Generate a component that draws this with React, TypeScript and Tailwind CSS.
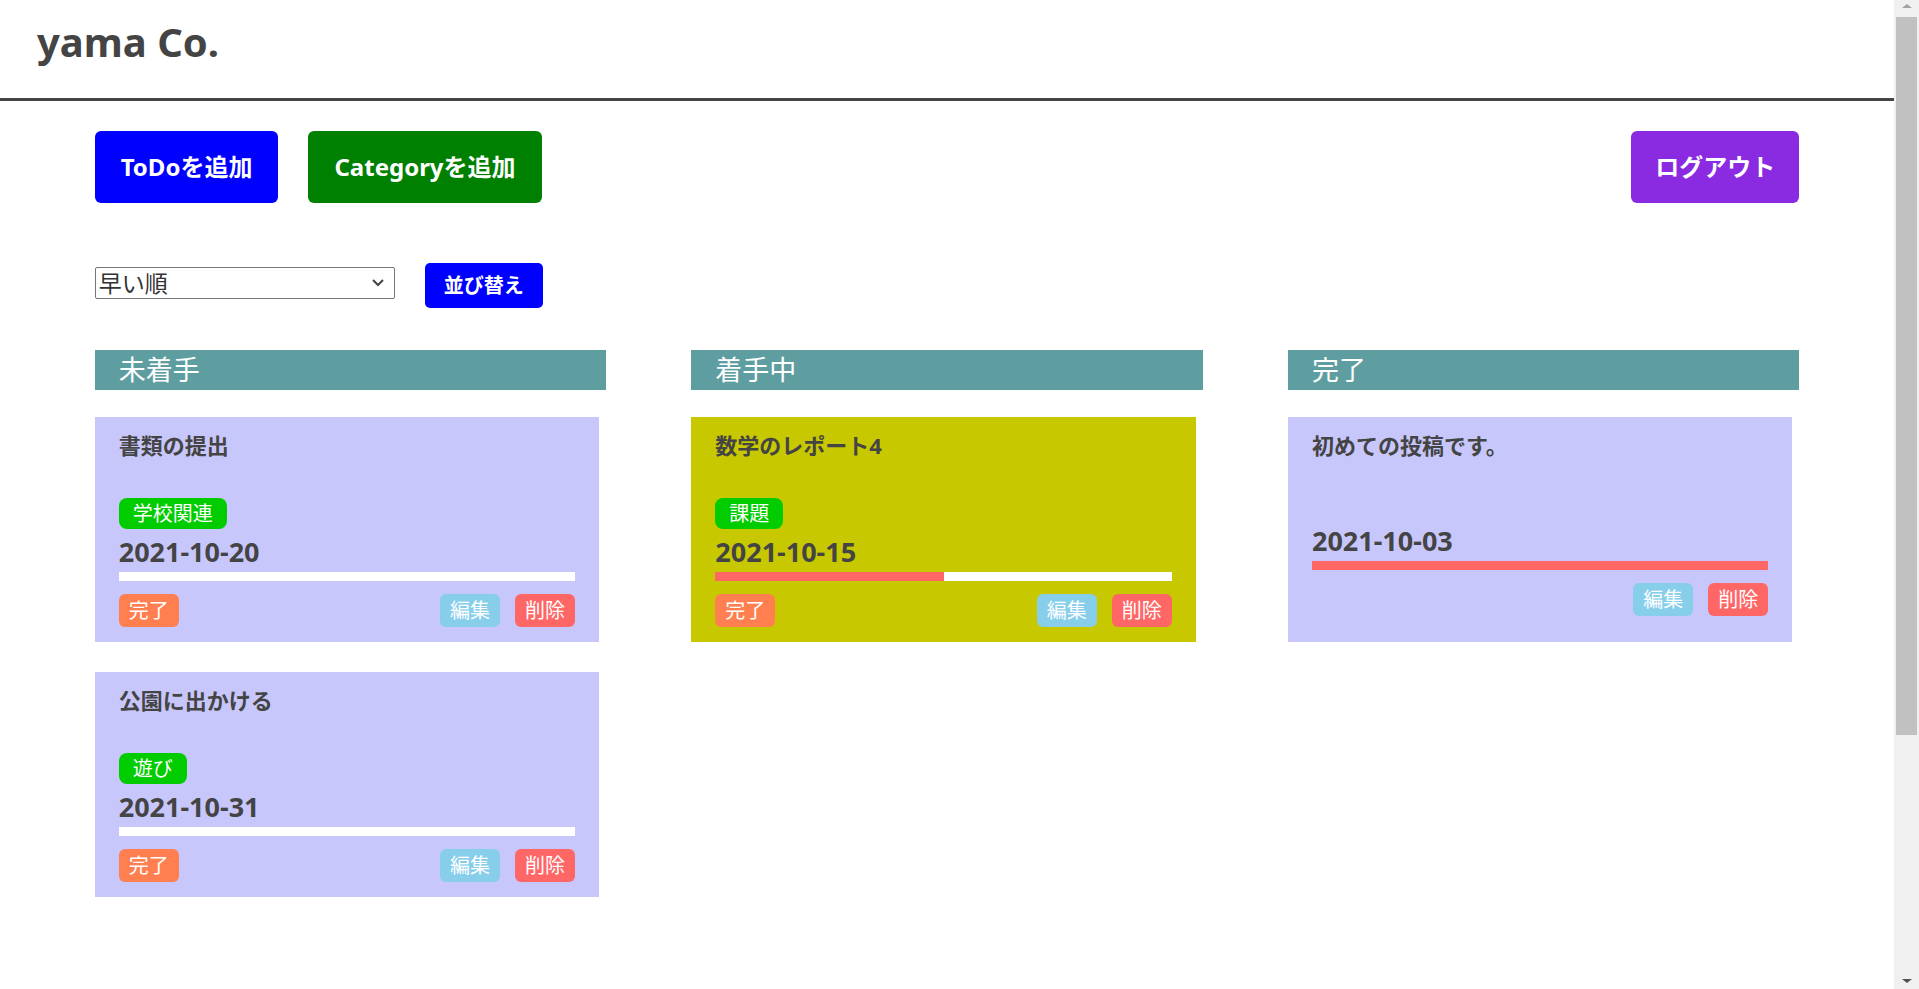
import React from "react";

type Todo = {
  title: string;
  tag?: string;
  date: string;
  progress: number;
  done?: boolean;
  bg: string;
};

const columns: { name: string; todos: Todo[] }[] = [
  {
    name: "未着手",
    todos: [
      { title: "書類の提出", tag: "学校関連", date: "2021-10-20", progress: 0, bg: "bg-[#c8c7fc]" },
      { title: "公園に出かける", tag: "遊び", date: "2021-10-31", progress: 0, bg: "bg-[#c8c7fc]" },
    ],
  },
  {
    name: "着手中",
    todos: [
      { title: "数学のレポート4", tag: "課題", date: "2021-10-15", progress: 50, bg: "bg-[#c8c800]" },
    ],
  },
  {
    name: "完了",
    todos: [
      { title: "初めての投稿です。", date: "2021-10-03", progress: 100, done: true, bg: "bg-[#c8c7fc]" },
    ],
  },
];

function Card({ t }: { t: Todo }) {
  return (
    <div className={`${t.bg} w-[calc(100%-7px)] h-[225px] pt-[13px] px-[24px] text-[#444]`}>
      <p className="text-[22px] leading-[30px] font-bold">{t.title}</p>
      {t.tag ? (
        <div className="mt-[38px] h-[31px]">
          <span className="inline-block h-[31px] px-[14px] rounded-[8px] bg-[#00cc00] text-white text-[20px] leading-[31px]">
            {t.tag}
          </span>
        </div>
      ) : (
        <div className="mt-[38px] h-[20px]" />
      )}
      <p className="mt-[8px] text-[27px] leading-[30px] font-bold">{t.date}</p>
      <div className="mt-[5px] h-[9px] bg-white">
        <div className="h-full bg-[#ff6666]" style={{ width: `${t.progress}%` }} />
      </div>
      <div className="mt-[13px] flex items-center justify-between">
        {!t.done ? (
          <button className="h-[33px] px-[10px] rounded-[6px] bg-[#ff7f50] text-white text-[20px] leading-[33px]">
            完了
          </button>
        ) : (
          <span />
        )}
        <div className="flex gap-[15px]">
          <button className="h-[33px] px-[10px] rounded-[6px] bg-[#87ceeb] text-white text-[20px] leading-[33px]">
            編集
          </button>
          <button className="h-[33px] px-[10px] rounded-[6px] bg-[#ff6666] text-white text-[20px] leading-[33px]">
            削除
          </button>
        </div>
      </div>
    </div>
  );
}

function ScrollBar() {
  return (
    <aside className="w-[25px] h-[989px] shrink-0 bg-[#f0f0f0] flex flex-col items-center">
      <svg width="14" height="8" viewBox="0 0 14 8" className="mt-[2px]">
        <path d="M2 6 L7 2 L12 6 Z" fill="#a3a3a3" />
      </svg>
      <div className="mt-[7px] w-[21px] h-[718px] bg-[#c1c1c1]" />
      <div className="flex-1" />
      <svg width="14" height="8" viewBox="0 0 14 8" className="mb-[4px]">
        <path d="M2 2 L7 6 L12 2 Z" fill="#505050" />
      </svg>
    </aside>
  );
}

export default function App() {
  return (
    <div
      className="flex bg-white h-[989px] overflow-hidden"
      style={{ fontFamily: '"Noto Sans", "Noto Sans CJK JP", sans-serif' }}
    >
      <div className="flex-1 min-w-0">
        <header className="pt-[12px] pb-[26px] pl-[37px] border-b-[3px] border-[#444]">
          <h1 className="text-[40px] leading-[60px] font-bold text-[#444]">yama Co.</h1>
        </header>
        <main className="px-[5%]">
          <div className="mt-[30px] flex items-center justify-between">
            <div className="flex gap-[30px]">
              <button className="px-[26px] py-[24px] leading-[24px] text-[24px] font-bold text-white bg-[#0000ff] rounded-[6px]">
                ToDoを追加
              </button>
              <button className="px-[26px] py-[24px] leading-[24px] text-[24px] font-bold text-white bg-[#008000] rounded-[6px]">
                Categoryを追加
              </button>
            </div>
            <button className="px-[24px] py-[24px] leading-[24px] text-[24px] font-bold text-white bg-[#8a2be2] rounded-[6px]">
              ログアウト
            </button>
          </div>
          <div className="mt-[60px] flex items-center gap-[30px]">
            <div className="relative w-[300px] h-[32px] -mt-[6px]">
              <select className="appearance-none w-full h-full border border-[#767676] rounded-[2px] pl-[3px] text-[23px] leading-[30px] text-[#333] bg-white">
                <option>早い順</option>
                <option>遅い順</option>
              </select>
              <svg
                width="14"
                height="10"
                viewBox="0 0 14 10"
                className="absolute right-[10px] top-[11px] pointer-events-none"
              >
                <path d="M2 2 L7 7 L12 2" fill="none" stroke="#444" strokeWidth="2" />
              </svg>
            </div>
            <button className="h-[45px] px-[19px] rounded-[5px] bg-[#0000ff] text-white text-[20px] font-bold">
              並び替え
            </button>
          </div>
          <div className="mt-[42px] flex justify-between">
            {columns.map((c) => (
              <section key={c.name} className="w-[30%]">
                <h2 className="h-[40px] pl-[24px] bg-[#5f9ea0] text-white text-[27px] leading-[40px]">
                  {c.name}
                </h2>
                <div className="mt-[27px] flex flex-col gap-[30px]">
                  {c.todos.map((t) => (
                    <Card key={t.title} t={t} />
                  ))}
                </div>
              </section>
            ))}
          </div>
        </main>
      </div>
      <ScrollBar />
    </div>
  );
}
